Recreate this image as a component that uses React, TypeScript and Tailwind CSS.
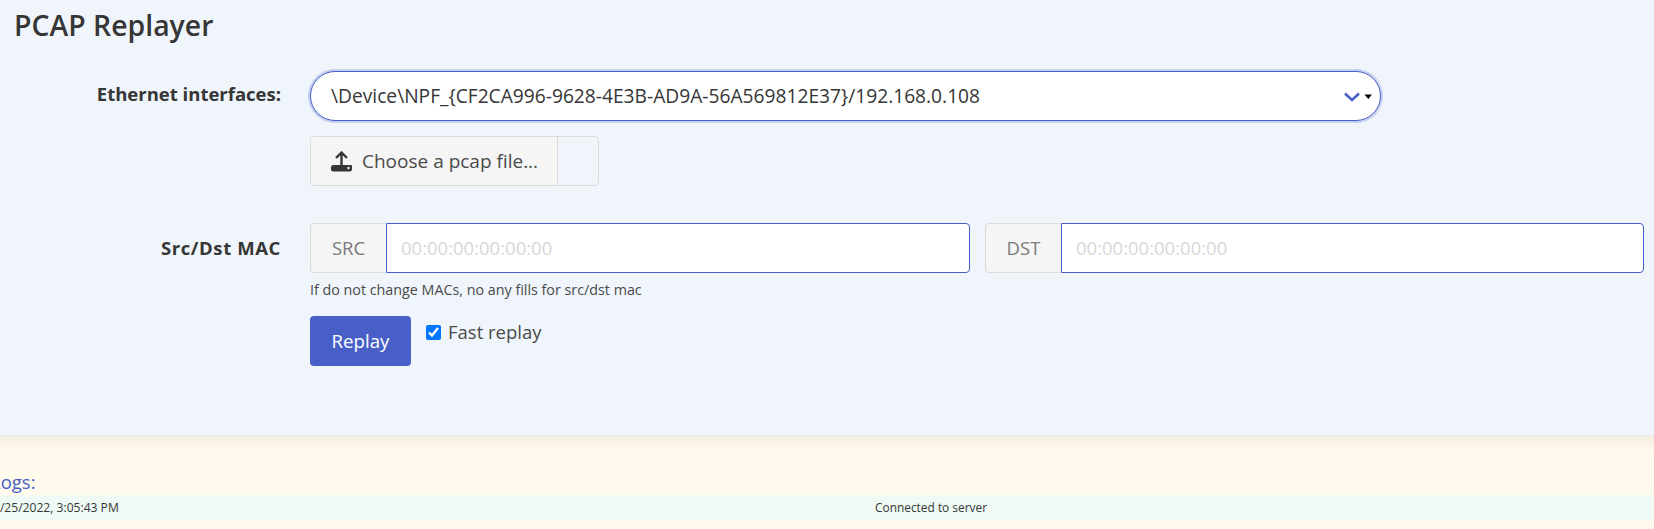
const FONT = "font-['Open_Sans','Noto_Sans',sans-serif]";

function UploadIcon() {
  return (
    <svg width="21" height="21" viewBox="0 0 21 21" className="shrink-0">
      <path d="M10.500 1.500V14M5 7l5.500-5.500L16 7" fill="none" stroke="#363636" strokeWidth="2.400" />
      <path
        d="M2.500 14H20a1 1 0 0 1 1 1v3a2.500 2.500 0 0 1-2.500 2.500h-16A2.500 2.500 0 0 1 0 18v-1.500A2.500 2.500 0 0 1 2.500 14z"
        fill="#363636"
      />
      <circle cx="17.500" cy="17" r="1.200" fill="#f5f5f5" />
    </svg>
  );
}

function MacInput({ label, className }: { label: string; className: string }) {
  return (
    <div className={`flex h-[50px] ${className}`}>
      <span className="flex w-[76px] shrink-0 items-center justify-center rounded-l border border-r-0 border-[#dbdbdb] bg-[#f5f5f5] text-[18.5px] text-[#7a7a7a]">
        {label}
      </span>
      <input
        type="text"
        placeholder="00:00:00:00:00:00"
        className="w-full min-w-0 rounded-r border border-[#485fc7] bg-white px-[14px] text-[18.5px] text-[#363636] outline-none placeholder:text-[#d7d7d7]"
      />
    </div>
  );
}

export default function App() {
  return (
    <div className={`h-[529px] w-[1654px] overflow-hidden bg-[#fffaeb] text-[#363636] ${FONT}`}>
      <div className="relative z-10 -mx-[20px] h-[436px] border-b border-[#e8e8e4] bg-[#eff5fb] px-[20px] shadow-[0_4px_14px_0_rgba(10,10,10,0.08)]">
        <h1 className="pl-[14px] pt-[6px] text-[28.4px] leading-[38px] font-semibold">PCAP Replayer</h1>

        <div className="mt-[27px] flex">
          <label className="w-[281px] pt-[11px] text-right text-[18.5px] leading-[24px] font-bold">Ethernet interfaces:</label>
          <div className="ml-[29px] w-[1071px]">
            <div className="relative h-[50px] rounded-full border border-[#485fc7] bg-white shadow-[0_0_0_2px_rgba(72,95,199,0.25)]">
              <select className="h-full w-full appearance-none rounded-full bg-transparent pl-[20px] text-[19.2px] text-[#363636] outline-none">
                <option>{"\\Device\\NPF_{CF2CA996-9628-4E3B-AD9A-56A569812E37}/192.168.0.108"}</option>
              </select>
              <svg width="30" height="10" viewBox="0 0 30 10" className="pointer-events-none absolute right-[6px] top-[20px]">
                <path d="M1 1.500l7 6.500 7-6.500" fill="none" stroke="#485fc7" strokeWidth="2.500" />
                <path d="M20.500 2.500h7.500l-3.700 4.500z" fill="#000" />
              </svg>
            </div>

            <div className="mt-[15px] flex h-[50px] w-[289px] rounded border border-[#dbdbdb]">
              <div className="flex w-[247px] items-center gap-[10px] rounded-l border-r border-[#dbdbdb] bg-[#f5f5f5] pl-[20px] text-[19px] text-[#4a4a4a]">
                <UploadIcon />
                <span>Choose a pcap file...</span>
              </div>
              <div className="flex-1" />
            </div>
          </div>
        </div>

        <div className="mt-[37px] flex">
          <label className="w-[281px] pt-[13px] text-right text-[18.5px] leading-[24px] font-bold tracking-[0.6px]">Src/Dst MAC</label>
          <div className="ml-[29px] w-[1334px]">
            <div className="flex gap-[15px]">
              <MacInput label="SRC" className="w-[660px]" />
              <MacInput label="DST" className="w-[659px]" />
            </div>
            <p className="mt-[8px] text-[14.300px] leading-[18px] text-[#4a4a4a]">If do not change MACs, no any fills for src/dst mac</p>
            <div className="mt-[17px] flex">
              <button type="button" className="h-[50px] w-[101px] rounded bg-[#485fc7] text-[18.7px] text-white">
                Replay
              </button>
              <label className="ml-[15px] flex h-[32px] items-center gap-[7px] text-[18.5px] leading-[32px] text-[#4a4a4a]">
                <input type="checkbox" defaultChecked className="h-[15px] w-[15px]" />
                Fast replay
              </label>
            </div>
          </div>
        </div>
      </div>

      <div className="-ml-[9px] pt-[33px] text-[18.5px] leading-[26px] text-[#485fc7]">Logs:</div>
      <div className="flex h-[25px] items-center bg-[#effaf5] text-[12px] leading-[25px] text-[#363636]">
        <span className="-ml-[7px] w-[882px] shrink-0 text-[12.1px]">9/25/2022, 3:05:43 PM</span>
        <span className="text-[11.9px]">Connected to server</span>
      </div>
    </div>
  );
}
